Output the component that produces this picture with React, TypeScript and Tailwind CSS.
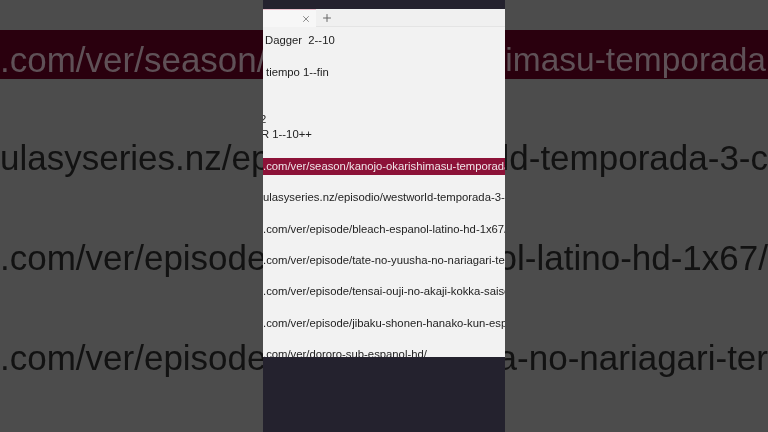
import { X, Plus } from "lucide-react";

const centerRows = [
  { text: "Dagger  2--10", pad: "pl-[2px]" },
  { text: "tiempo 1--fin", pad: "pl-[3px]" },
  { text: "", pad: "" },
  { text: "R 1--10++", pad: "-ml-[2px]" },
  { text: ".com/ver/season/kanojo-okarishimasu-temporada-3", pad: "", active: true },
  { text: "ulasyseries.nz/episodio/westworld-temporada-3-capitulo", pad: "" },
  { text: ".com/ver/episode/bleach-espanol-latino-hd-1x67/", pad: "" },
  { text: ".com/ver/episode/tate-no-yuusha-no-nariagari-temporada", pad: "" },
  { text: ".com/ver/episode/tensai-ouji-no-akaji-kokka-saisei", pad: "" },
  { text: ".com/ver/episode/jibaku-shonen-hanako-kun-espanol", pad: "" },
  { text: ".com/ver/dororo-sub-espanol-hd/", pad: "" },
];

const SideBlock = ({ right }: { right?: boolean }) => {
  const rows = right
    ? ["imasu-temporada", "ld-temporada-3-c", "ol-latino-hd-1x67/", "a-no-nariagari-ter"]
    : [".com/ver/season/", "ulasyseries.nz/episodio", ".com/ver/episode/", ".com/ver/episode/"];

  return (
    <div className="w-[263px] h-full shrink-0 overflow-hidden bg-[#4c4c4c] font-['Liberation_Sans',sans-serif] text-[35px] text-[#121212] pt-[30px] blur-[0.6px]">
      <div className={`h-[49px] bg-[#2a000e] text-[#5f5157] pt-[11px] flex items-center whitespace-nowrap ${right ? "justify-end text-[33.5px] pr-[2px]" : ""}`}>
        {rows[0]}
      </div>
      <div className={`h-[100px] mt-[29px] flex items-center whitespace-nowrap ${right ? "justify-end" : ""}`}>
        {rows[1]}
      </div>
      <div className={`h-[100px] flex items-center whitespace-nowrap ${right ? "justify-end" : ""}`}>
        {rows[2]}
      </div>
      <div className={`h-[100px] flex items-center whitespace-nowrap ${right ? "justify-end" : ""}`}>
        {rows[3]}
      </div>
    </div>
  );
};

export default function App() {
  return (
    <div className="w-[768px] h-[432px] overflow-hidden flex bg-[#4c4c4c]">
      <SideBlock />

      <div className="w-[242px] h-full shrink-0 flex flex-col bg-[#24222e] font-['Liberation_Sans',sans-serif]">
        <div className="h-[9px] shrink-0" />

        {/* tab strip */}
        <div className="h-[18px] shrink-0 flex bg-[#f0f0f0] border-b border-[#e4e4e4]">
          <div className="w-[53px] h-[18px] bg-[#f7f7f7] border-t border-[#e8c0cc] flex items-center justify-end pr-[5px]">
            <X className="w-[10px] h-[10px] text-[#777777]" />
          </div>
          <div className="w-[22px] flex items-center justify-center">
            <Plus className="w-[12px] h-[12px] text-[#666666]" />
          </div>
        </div>

        {/* list */}
        <div className="h-[330px] shrink-0 overflow-hidden bg-[#f2f2f2] text-[11.3px] text-[#222222] blur-[0.4px]">
          <div className="-mt-[2px]">
            {centerRows.map((row, i) => (
              <div
                key={i}
                className={`h-[31.4px] flex items-center whitespace-pre ${row.pad}`}
              >
                {row.text && (
                  <div className={`w-full h-[17px] leading-[16px] ${row.active ? "bg-[#8c1238] text-[#f0e4e8]" : ""}`}>
                    {row.text}
                  </div>
                )}
                {i === 2 && <div className="self-end -mb-[7px] -ml-[3px] leading-[14px]">2</div>}
              </div>
            ))}
          </div>
        </div>

        <div className="flex-1" />
      </div>

      <SideBlock right />
    </div>
  );
}
